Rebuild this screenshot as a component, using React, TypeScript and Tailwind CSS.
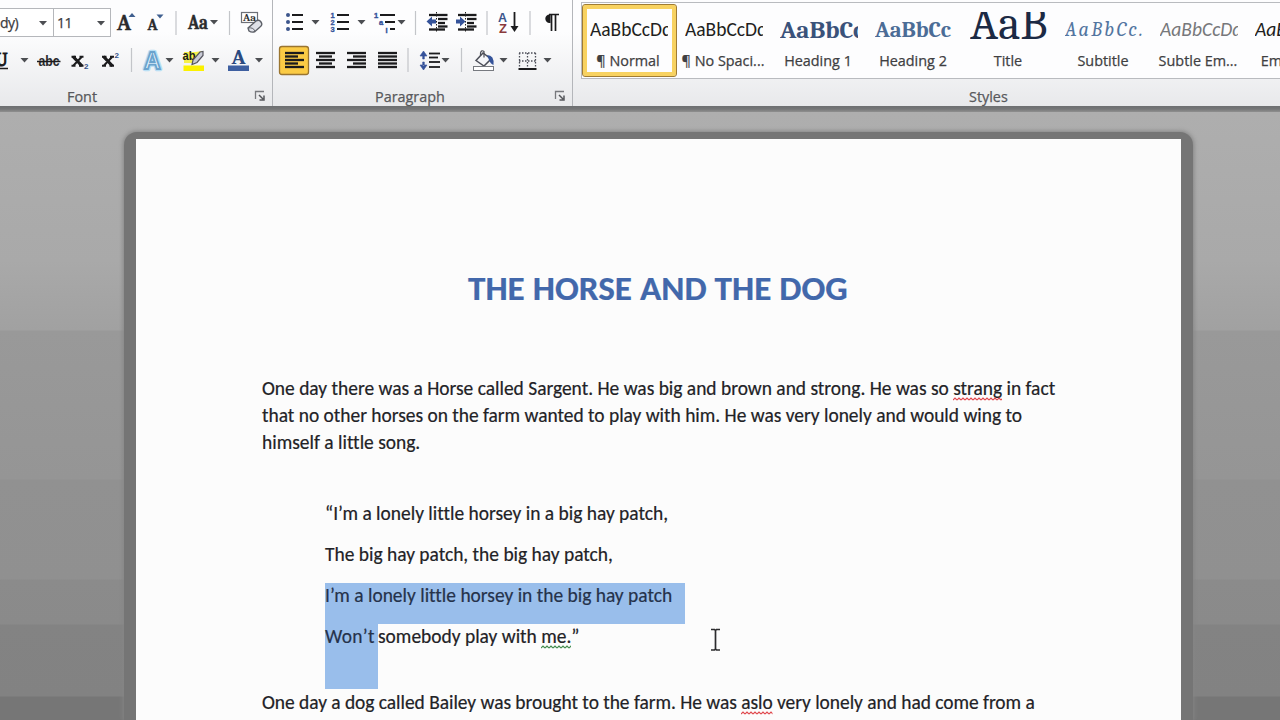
import type { ReactNode } from "react"
import { clsx } from "clsx"

// One slot of a toolbar row. Slots sit side by side and share the row's coordinates
type SlotProps = {
  x: number // Left edge of the slot in ribbon coordinates
  to: number // Right edge of the slot
  y: number // Top of the toolbar row
  children?: ReactNode
}

function Slot({ x, to, y, children }: SlotProps) {
  return (
    <svg width={to - x} height={34} viewBox={`${x} ${y} ${to - x} 34`} className="block shrink-0">
      {children}
    </svg>
  )
}

// Small drop-down triangle
function Caret({ x, y }: { x: number; y: number }) {
  return <path d={`M${x - 4} ${y - 2}h8l-4 4.5z`} fill="#4c4e52" />
}

// Thin divider between buttons
function Divider({ x, y }: { x: number; y: number }) {
  return <path d={`M${x} ${y - 12}v24`} stroke="#c3c5c9" strokeWidth="1.2" />
}

// Horizontal strokes used by the alignment and list icons: [x1, x2, y]
function Bars({ rows, w = 2.3 }: { rows: number[][]; w?: number }) {
  return (
    <g stroke="#1b1b1d" strokeWidth={w}>
      {rows.map(([a, b, y]) => (
        <path key={`${a}-${y}`} d={`M${a} ${y}H${b}`} />
      ))}
    </g>
  )
}

// Dialog launcher in the corner of a group
function Launcher() {
  return (
    <svg width="12" height="12" viewBox="0 0 12 12" className="block">
      <path d="M1.5 9V1.500H10" fill="none" stroke="#77797d" strokeWidth="1.3" />
      <path d="M5 5l4 4M10 5.500V10H5.500" fill="none" stroke="#55575b" strokeWidth="1.5" />
    </svg>
  )
}

function GroupLabel({ text, className, launcher = true }: { text: string; className?: string; launcher?: boolean }) {
  return (
    <div className="flex h-[21px] items-center pr-[6px]">
      <span className={clsx("flex-1 pt-px text-[14.4px] leading-[21px] text-[#58595c] [-webkit-text-stroke:0.25px]", className)}>{text}</span>
      {launcher && <Launcher />}
    </div>
  )
}

const serif = "Caladea, 'DejaVu Serif Condensed', serif"

function FontGroup() {
  return (
    <section className="flex w-[273px] flex-col border-r border-[#b4b6ba] pt-[5px]">
      <div className="flex h-[38px] items-start">
        <div className="mt-[3px] flex h-[29px] w-[111px] border-y border-[#b5b7bb] bg-white text-[14px] leading-[27px] text-[#3c3c3e] [-webkit-text-stroke:0.25px]">
          <span className="w-[38px] tracking-[-0.5px]">dy)</span>
          <span className="flex w-[16px] items-center border-r border-[#b5b7bb]">
            <svg width="10" height="6" viewBox="0 0 10 6"><path d="M1 1h8L5 5.500z" fill="#4c4e52" /></svg>
          </span>
          <span className="w-[42px] pl-[3px] tracking-[-0.5px]">11</span>
          <span className="flex w-[15px] items-center border-r border-[#b5b7bb]">
            <svg width="10" height="6" viewBox="0 0 10 6"><path d="M1 1h8L5 5.500z" fill="#4c4e52" /></svg>
          </span>
        </div>
        <Slot x={111} to={141} y={5}>
          <text x="117" y="30" fontSize="22" fontWeight="700" fontFamily={serif} textLength="14" lengthAdjust="spacingAndGlyphs" fill="#2b2b2d" stroke="#2b2b2d" strokeWidth=".3">A</text>
          <path d="M128.500 17l3.500-4 3.500 4z" fill="#3f5f8f" />
        </Slot>
        <Slot x={141} to={170} y={5}>
          <text x="147.500" y="30" fontSize="16" fontWeight="700" fontFamily={serif} textLength="10" lengthAdjust="spacingAndGlyphs" fill="#2b2b2d" stroke="#2b2b2d" strokeWidth=".3">A</text>
          <path d="M156.500 14.500h7l-3.500 4z" fill="#3f5f8f" />
        </Slot>
        <Slot x={170} to={235} y={5}>
          <Divider x={176} y={23} />
          <text x="188" y="29" fontSize="19.500" fontWeight="700" fontFamily={serif} textLength="20" lengthAdjust="spacingAndGlyphs" fill="#2b2b2d" stroke="#2b2b2d" strokeWidth=".4">Aa</text>
          <Caret x={214} y={22} />
          <Divider x={229.500} y={23} />
        </Slot>
        <Slot x={235} to={270} y={5}>
          <rect x="241.500" y="12.500" width="16" height="10" fill="#fff" stroke="#6d7077" strokeWidth="1.200" />
          <text x="243" y="21" fontSize="10" fontWeight="700" fontFamily={serif} textLength="13" lengthAdjust="spacingAndGlyphs" fill="#333">Aa</text>
          <path d="M248 28l8-7q3-2 5 1t-1 5l-5 4.500q-3 1.500-6-.5z" fill="#dfe1e8" stroke="#5d6068" strokeWidth="1.400" />
          <path d="M248 28q5-1 7 3" fill="none" stroke="#5d6068" />
        </Slot>
      </div>
      <div className="flex h-[43px] items-start">
        <Slot x={0} to={33} y={43}>
          <text x="-5.500" y="65.500" fontSize="18" fontWeight="700" fontFamily="'Liberation Serif'" fill="#1b1b1d" stroke="#1b1b1d" strokeWidth="1">U</text>
          <path d="M0 68.500H8" stroke="#1b1b1d" strokeWidth="1.500" />
          <Caret x={24.500} y={60} />
        </Slot>
        <Slot x={33} to={66} y={43}>
          <text x="38.500" y="66" fontSize="15" fontWeight="700" fontFamily="'Liberation Sans'" textLength="21" lengthAdjust="spacingAndGlyphs" fill="#2b2b2d">abc</text>
          <path d="M37 61.500H60.500" stroke="#1b1b1d" strokeWidth="1.500" />
        </Slot>
        <Slot x={66} to={97} y={43}>
          <path d="M73 56.500l9 9.500M82 56.500l-9 9.500M71.500 56.800h4.500M79.500 56.800h4M71.500 65.700h4M79 65.700h4.500" stroke="#1b1b1d" strokeWidth="2" />
          <path d="M73 56.500l9 9.500" stroke="#1b1b1d" strokeWidth="3.200" />
          <text x="84" y="69" fontSize="8" fontWeight="700" fontFamily="'Liberation Sans'" fill="#33518a">2</text>
        </Slot>
        <Slot x={97} to={137} y={43}>
          <path d="M103.500 56.500l9 9.500M112.500 56.500l-9 9.500M102 56.800h4.500M110 56.800h4M102 65.700h4M109.500 65.700h4.500" stroke="#1b1b1d" strokeWidth="2" />
          <path d="M103.500 56.500l9 9.500" stroke="#1b1b1d" strokeWidth="3.200" />
          <text x="114.500" y="57.500" fontSize="8" fontWeight="700" fontFamily="'Liberation Sans'" fill="#33518a">2</text>
          <Divider x={131.500} y={60} />
        </Slot>
        <Slot x={137} to={178} y={43}>
          <g fontSize="23" fontFamily="'Liberation Sans'" fontWeight="700">
            <text x="144" y="69" stroke="#b9dff4" strokeWidth="4.500" fill="none" strokeLinejoin="round">A</text>
            <text x="144" y="69" stroke="#6ba3cd" strokeWidth="1.800" fill="#e6f3fb">A</text>
          </g>
          <Caret x={169.500} y={60} />
        </Slot>
        <Slot x={178} to={223} y={43}>
          <path d="M184 52h11l8-1-6 12-13 0z" fill="#f6f04a" />
          <text x="182.500" y="60" fontSize="12.500" fontWeight="700" fontFamily="'Liberation Sans'" textLength="13" lengthAdjust="spacingAndGlyphs" fill="#1b1b1d">ab</text>
          <path d="M193 60l7-8 3-.5v4l-6 7-5 2z" fill="#c9cbd6" stroke="#55555f" strokeWidth="1.200" />
          <rect x="183.500" y="65.500" width="20.500" height="5.500" fill="#fbf100" />
          <Caret x={215.500} y={60} />
        </Slot>
        <Slot x={223} to={270} y={43}>
          <text x="231.500" y="64" fontSize="19.500" fontWeight="700" fontFamily={serif} textLength="14" lengthAdjust="spacingAndGlyphs" fill="#2b4a80">A</text>
          <rect x="228" y="65.500" width="21" height="5.500" fill="#3e5fa0" />
          <Caret x={259} y={60} />
        </Slot>
      </div>
      <GroupLabel text="Font" className="pl-[67px]" />
    </section>
  )
}

function ParagraphGroup() {
  return (
    <section className="flex w-[300px] flex-col border-r border-[#b4b6ba] pt-[5px]">
      <div className="flex h-[38px] items-start">
        <Slot x={273} to={324} y={5}>
          {[15, 22, 29].map((y) => (
            <circle key={y} cx="288" cy={y} r="2" fill="#3c558c" />
          ))}
          <Bars rows={[[292, 303, 15], [292, 303, 22], [292, 303, 29]]} w={2} />
          <Caret x={315.500} y={22} />
        </Slot>
        <Slot x={324} to={370} y={5}>
          <g fontSize="7.500" fontWeight="700" fontFamily="'Liberation Sans'" fill="#35539a" stroke="#35539a" strokeWidth=".3">
            <text x="330.500" y="18">1</text>
            <text x="330.500" y="25">2</text>
            <text x="330.500" y="32">3</text>
          </g>
          <Bars rows={[[337, 349, 15], [337, 349, 22], [337, 349, 29]]} w={2} />
          <Caret x={361.500} y={22} />
        </Slot>
        <Slot x={370} to={422} y={5}>
          <g fontSize="7.500" fontWeight="700" fontFamily="'Liberation Sans'" fill="#35539a" stroke="#35539a" strokeWidth=".4">
            <text x="374" y="18">1</text>
            <text x="379" y="25">a</text>
            <text x="385.500" y="33">i</text>
          </g>
          <Bars rows={[[380, 395, 15], [385, 395, 22], [390, 395, 29]]} w={2} />
          <Caret x={401.500} y={22} />
          <Divider x={415.500} y={23} />
        </Slot>
        <Slot x={422} to={453} y={5}>
          <Bars rows={[[429, 447.500, 15], [438, 447.500, 19], [438, 445, 23], [438, 447.500, 26.500], [429, 445, 29.500]]} />
          <path d="M436.500 12v20" stroke="#222" strokeDasharray="1.500 1.500" />
          <path d="M426.500 21.500l5.500-5v3h4v4h-4v3z" fill="#35539a" />
        </Slot>
        <Slot x={453} to={493} y={5}>
          <Bars rows={[[458, 476.500, 15], [467, 476.500, 19], [467, 474, 23], [467, 476.500, 26.500], [458, 474, 29.500]]} />
          <path d="M465.500 12v20" stroke="#222" strokeDasharray="1.500 1.500" />
          <path d="M465.500 21.500l-5.500-5v3h-4v4h4v3z" fill="#35539a" />
          <Divider x={487} y={23} />
        </Slot>
        <Slot x={493} to={535} y={5}>
          <g fontSize="13" fontWeight="700" fontFamily="'Liberation Sans'">
            <text x="498" y="21.500" textLength="9" lengthAdjust="spacingAndGlyphs" fill="#3c558c">A</text>
            <text x="499" y="32.500" fill="#8a3a3c">Z</text>
          </g>
          <path d="M514.500 12v17" stroke="#1b1b1d" strokeWidth="1.800" />
          <path d="M510.500 26h8l-4 6z" fill="#1b1b1d" />
          <Divider x={530} y={23} />
        </Slot>
        <Slot x={535} to={570} y={5}>
          <path d="M558 14.500h-8.500a4.200 4.200 0 0 0 0 8.400h1v-8.400z" fill="#1b1b1d" />
          <path d="M551.500 14v17M555.500 14v17M549 14.500h10" stroke="#1b1b1d" strokeWidth="1.700" />
        </Slot>
      </div>
      <div className="flex h-[43px] items-start">
        <Slot x={273} to={310} y={43}>
          <rect x="279.500" y="46.500" width="29" height="28" rx="2.500" fill="#fbcb45" stroke="#9a7530" strokeWidth="1.300" />
          <Bars rows={[[285, 304, 53], [285, 298, 56.500], [285, 304, 60], [285, 298, 63.500], [285, 304, 67]]} />
        </Slot>
        <Slot x={310} to={340} y={43}>
          <Bars rows={[[316, 335, 53], [319, 332, 56.500], [316, 335, 60], [319, 332, 63.500], [316, 335, 67]]} />
        </Slot>
        <Slot x={340} to={371} y={43}>
          <Bars rows={[[347, 366, 53], [353, 366, 56.500], [347, 366, 60], [353, 366, 63.500], [347, 366, 67]]} />
        </Slot>
        <Slot x={371} to={413} y={43}>
          <Bars rows={[[378, 397, 53], [378, 397, 56.500], [378, 397, 60], [378, 397, 63.500], [378, 397, 67]]} />
          <Divider x={408} y={60} />
        </Slot>
        <Slot x={413} to={467} y={43}>
          <path d="M420 56l3.500-5 3.500 5zM420 65l3.500 5 3.500-5zM422.700 55h1.600v4h-1.600zM422.700 62h1.600v4h-1.600z" fill="#35539a" stroke="#35539a" strokeWidth=".6" />
          <Bars rows={[[429, 440, 53.500], [429, 438, 57.500], [429, 440, 62], [429, 440, 67]]} w={1.800} />
          <Caret x={445.500} y={60} />
          <Divider x={461.500} y={60} />
        </Slot>
        <Slot x={467} to={512} y={43}>
          <path d="M476 60.500l7-7.500 8 6-7 7z" fill="#f5f6f9" stroke="#4c4e58" strokeWidth="1.500" />
          <path d="M480.500 56v-3q1-3.500 3.500-1.500v6" fill="none" stroke="#4c4e58" strokeWidth="1.200" />
          <path d="M487 55q7.500 0 6.500 10-3-1-4.500-5z" fill="#35539a" />
          <rect x="473.500" y="66.500" width="20" height="4" fill="#fff" stroke="#777a80" />
          <Caret x={503.500} y={60} />
        </Slot>
        <Slot x={512} to={570} y={43}>
          <path d="M519 53h17M519 61h17M519.500 53v15M527.500 53v15M535.500 53v15" fill="none" stroke="#4c4e58" strokeWidth="1.300" strokeDasharray="1.500 1.500" />
          <path d="M518.500 69h18" stroke="#1b1b1d" strokeWidth="2" />
          <Caret x={547.500} y={60} />
        </Slot>
      </div>
      <GroupLabel text="Paragraph" className="pl-[102px]" />
    </section>
  )
}

const calibri = "font-['Carlito',Lato,sans-serif] [font-variant-ligatures:none]"
const cambria = "font-['Caladea','DejaVu_Serif_Condensed',serif]"

// Quick styles shown in the gallery
const quickStyles = [
  { name: "¶ Normal", sample: "AaBbCcDd", look: clsx(calibri, "text-[19.5px] leading-[35px] text-[#1f1f21]"), active: true },
  { name: "¶ No Spaci...", sample: "AaBbCcDd", look: clsx(calibri, "text-[19.5px] leading-[35px] text-[#1f1f21]") },
  { name: "Heading 1", sample: "AaBbCc", look: clsx(cambria, "text-[25px] leading-[36px] font-bold text-[#3a527a]") },
  { name: "Heading 2", sample: "AaBbCc", look: clsx(cambria, "text-[22.5px] leading-[36px] font-bold text-[#4b6c96]") },
  { name: "Title", sample: "AaB", look: clsx(cambria, "text-[47px] leading-[24px] text-[#1c2a44]") },
  { name: "Subtitle", sample: "AaBbCc.", look: clsx(cambria, "text-[20px] leading-[36px] tracking-[2.3px] italic text-[#5375a0]") },
  { name: "Subtle Em...", sample: "AaBbCcDd", look: clsx(calibri, "text-[19.5px] leading-[35px] italic text-[#77787b]") },
  { name: "Emphasis", sample: "AaBbCcDd", look: clsx(calibri, "text-[19.5px] leading-[35px] italic text-[#1f1f21]") },
]

function StylesGroup() {
  return (
    <section className="flex w-[707px] flex-col pt-[2px] pl-[8px]">
      <div className="flex h-[78px] overflow-hidden border-y border-l border-[#b9bbbf] bg-[#fdfdfe]">
        {quickStyles.map((style) => (
          <div
            key={style.name}
            className={clsx(
              "mt-px flex h-[73px] w-[95px] shrink-0 flex-col items-center rounded-[3px] border",
              style.active ? "border-[#a07c33] shadow-[inset_0_0_0_4px_#f8d260]" : "border-transparent",
            )}
          >
            <div className="mt-[7px] mr-px flex h-[33px] w-[78px] items-start overflow-hidden">
              <span className={clsx("whitespace-nowrap", style.look)}>{style.sample}</span>
            </div>
            <span className="mt-[6px] mr-[3px] text-[14.4px] leading-[20px] whitespace-nowrap text-[#3f3f42] [-webkit-text-stroke:0.25px]">{style.name}</span>
          </div>
        ))}
      </div>
      <div className="mt-[6px]">
        <GroupLabel text="Styles" className="pl-[388px]" launcher={false} />
      </div>
    </section>
  )
}

// Word flagged by the proofing tools, with a squiggle under it
function Flagged({ children, grammar = false }: { children: string; grammar?: boolean }) {
  return (
    <span className="relative">
      {children}
      <svg className="absolute bottom-[-1px] left-0 h-[4px] w-full">
        <defs>
          <pattern id={grammar ? "grammar" : "spelling"} width="4" height="4" patternUnits="userSpaceOnUse">
            <path d="M0 3L2 1L4 3" fill="none" stroke={grammar ? "#3f8a4a" : "#e0454a"} strokeWidth="1.100" />
          </pattern>
        </defs>
        <rect width="100%" height="4" fill={grammar ? "url(#grammar)" : "url(#spelling)"} />
      </svg>
    </span>
  )
}

function Page() {
  return (
    <article className={clsx("h-[581px] w-[1045px] overflow-hidden bg-[#fcfcfc] pt-[131px] pl-[126px] text-[19.45px] text-[#222226] [-webkit-text-stroke:0.2px]", calibri)}>
      <h1 className="ml-[206px] h-[105px] text-[35.2px] leading-[36px] font-bold whitespace-nowrap text-[#4268ab]">THE HORSE AND THE DOG</h1>
      <div className="leading-[27.2px] whitespace-nowrap">
        <p>One day there was a Horse called Sargent. He was big and brown and strong. He was so <Flagged>strang</Flagged> in fact</p>
        <p className="tracking-[-0.01px]">that no other horses on the farm wanted to play with him. He was very lonely and would wing to</p>
        <p>himself a little song.</p>
      </div>
      <div className="mt-[44.4px] ml-[63px] leading-[24px] whitespace-nowrap">
        <p className="h-[41px]">“I’m a lonely little horsey in a big hay patch,</p>
        <p className="h-[41px]">The big hay patch, the big hay patch,</p>
        <p className="h-[41px] w-[360px] bg-[#99beeb] text-[#25324a]">I’m a lonely little horsey in the big hay patch</p>
        <div className="flex h-[65px]">
          <span className="w-[53px] bg-[#99beeb] tracking-[0.3px] text-[#25324a]">Won’t</span>
          <p>somebody play with <Flagged grammar>me.</Flagged>”</p>
        </div>
      </div>
      <p className="leading-[27px] tracking-[-0.03px] whitespace-nowrap">One day a dog called Bailey was brought to the farm. He was <Flagged>aslo</Flagged> very lonely and had come from a</p>
    </article>
  )
}

export default function App() {
  return (
    <div className="relative h-[720px] w-[1280px] overflow-hidden bg-[#808080] font-['Open_Sans','Noto_Sans',sans-serif]">
      <header className="flex h-[106px] bg-linear-to-b from-[#fdfdfe] from-30% to-[#e8e9eb]">
        <FontGroup />
        <ParagraphGroup />
        <StylesGroup />
      </header>
      <div className="h-[6px] bg-linear-to-b from-[#6d6f71] via-[#757677] to-[#8f8f8f]" />
      {/* Workspace behind the page */}
      <main className="h-[608px] bg-[linear-gradient(#aeaeae_0px,#a9a9a9_148px,#a1a1a1_218px,#999999_219px,#959595_367px,#919191_368px,#909090_467px,#8b8b8b_468px,#8a8a8a_512px,#838383_513px,#828282_584px,#767676_585px)] pt-[20px]">
        <div className="ml-[124px] w-[1069px] rounded-t-[13px] bg-[#757575] px-[12px] pt-[7px] shadow-[0_0_4px_1px_#858585]">
          <Page />
        </div>
      </main>
      {/* Text cursor */}
      <svg className="absolute top-[628px] left-[710px]" width="12" height="24" viewBox="0 0 12 24">
        <path d="M1 1.500h3.500l1 1 1-1H10M5.500 2v19M1 22h3.500l1-1 1 1H10" fill="none" stroke="#2c2c2e" strokeWidth="1.700" />
      </svg>
    </div>
  )
}
